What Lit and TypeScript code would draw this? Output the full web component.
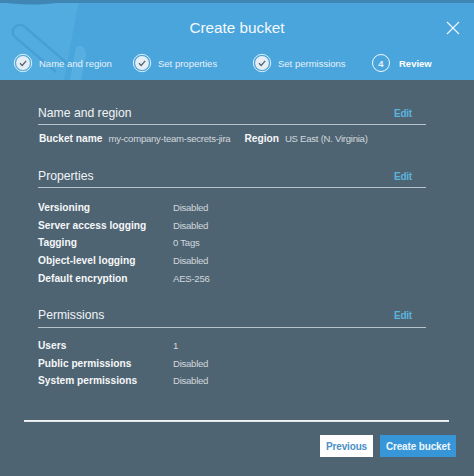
import { LitElement, html, css } from "lit";
import { customElement } from "lit/decorators.js";

const check = html`<svg class="step-ic" width="20" height="20" viewBox="0 0 20 20">
  <circle cx="10" cy="10" r="8.7" fill="none" stroke="#dcecf7" stroke-width="1"/>
  <circle cx="10" cy="10" r="6.9" fill="#e6edf3"/>
  <path d="M7 10.2l2.2 2.3 4-4.6" fill="none" stroke="#4e6472" stroke-width="1.3"/>
</svg>`;

@customElement("app-root")
export class AppRoot extends LitElement {
  static styles = css`
    :host { display: block; width: 474px; height: 476px; font-family: "Liberation Sans", Arial, sans-serif; color: #fff; }
    .modal { position: relative; width: 474px; height: 476px; background: #4f6473; overflow: hidden; display: flex; flex-direction: column; }
    .top { position: absolute; left: 0; top: 0; width: 474px; height: 3px; background: #3f86b4; }
    .head { position: relative; height: 80px; background: #4aa5dc; flex: none; overflow: hidden; }
    .deco { position: absolute; left: 0; top: 0; }
    .title { position: absolute; left: 0; right: 0; top: 18px; text-align: center; font-size: 15.3px; line-height: 20px; color: #f4f9fc; }
    .close { position: absolute; left: 446px; top: 21px; }
    .steps { position: absolute; left: 13px; top: 53px; display: flex; align-items: center; height: 20px; font-size: 9.5px; color: #e6f2fa; }
    .step { display: flex; align-items: center; gap: 6px; }
    .s1 { width: 119px; } .s2 { width: 120px; } .s3 { width: 120px; }
    .num { width: 16px; height: 16px; border: 1px solid #f2f8fc; border-radius: 50%; display: flex; align-items: center; justify-content: center; font-weight: 700; font-size: 9.5px; margin-right: 3px; }
    .rev { font-weight: 700; color: #fff; }
    .body { padding: 22px 48px 0 38px; flex: none; height: 340px; box-sizing: border-box; }
    .sec-h { display: flex; justify-content: space-between; align-items: center; height: 21px; padding-bottom: 1px; border-bottom: 1px solid #b7c4cd; font-size: 12.2px; color: #f0f3f5; }
    .edit { font-size: 10px; font-weight: 700; letter-spacing: -0.2px; color: #5cb4dd; margin-right: 14px; padding-top: 1px; }
    .inline { display: flex; align-items: center; height: 14px; margin-top: 6px; padding-left: 1px; font-size: 9.6px; letter-spacing: -0.27px; color: #cfd7dc; }
    .b { font-weight: 700; font-size: 10.2px; letter-spacing: 0; color: #f5f7f8; }
    .gap6 { margin-right: 6px; }
    .gap14 { margin-right: 14px; }
    .props { margin-top: 11px; display: grid; grid-template-columns: 135px 1fr; grid-auto-rows: 17.6px; font-size: 9.6px; letter-spacing: -0.27px; align-items: center; color: #cfd7dc; }
    .props.tight { margin-top: 9px; }
    .mt1 { margin-top: 20px; }
    .mt2 { margin-top: 18px; }
    .foot-line { height: 1px; background: #f1f4f6; margin: 0 25px 0 24px; border-bottom: 1px solid #dfe6ea; flex: none; }
    .foot { display: flex; justify-content: flex-end; gap: 7px; padding: 13px 18px 0 0; }
    .btn { height: 22px; box-sizing: border-box; font: 700 10px "Liberation Sans", Arial, sans-serif; letter-spacing: -0.15px; display: flex; align-items: center; justify-content: center; }
    .prev { width: 53px; background: #fff; color: #4a90c6; }
    .create { width: 76px; background: #3796d8; color: #eef6fb; }
  `;

  render() {
    return html`<div class="modal">
      <div class="head">
        <svg class="deco" width="100" height="80" viewBox="0 0 100 80">
          <path d="M0 0H79L64 80H0Z" fill="#52acdf"/>
          <path d="M0 0H68C60 5 20 6 0 2Z" fill="#3f86b4"/>
          <path d="M25 27L68 64M15 37L56 72" stroke="#459dd2" stroke-width="2.4" fill="none" opacity=".8"/>
          <path d="M25 27C18 21 8 30 15 37" stroke="#459dd2" stroke-width="2.4" fill="none" opacity=".8"/>
          <path d="M76 47C84 42 88 52 85 60L81 80H70Z" fill="#5ab2e2" opacity=".8"/>
        </svg>
        <div class="top"></div>
        <div class="title">Create bucket</div>
        <svg class="close" width="14" height="14" viewBox="0 0 14 14"><path d="M1 1L13 13M13 1L1 13" stroke="#f3f8fc" stroke-width="1.1" fill="none"/></svg>
        <div class="steps">
          <div class="step s1">${check}<span>Name and region</span></div>
          <div class="step s2">${check}<span>Set properties</span></div>
          <div class="step s3">${check}<span>Set permissions</span></div>
          <div class="step"><span class="num">4</span><span class="rev">Review</span></div>
        </div>
      </div>
      <div class="body">
        <div class="sec-h"><span>Name and region</span><span class="edit">Edit</span></div>
        <div class="inline"><span class="b gap6">Bucket name</span><span class="gap14">my-company-team-secrets-jira</span><span class="b gap6">Region</span><span>US East (N. Virginia)</span></div>
        <div class="sec-h mt1"><span>Properties</span><span class="edit">Edit</span></div>
        <div class="props">
          <span class="b">Versioning</span><span>Disabled</span>
          <span class="b">Server access logging</span><span>Disabled</span>
          <span class="b">Tagging</span><span>0 Tags</span>
          <span class="b">Object-level logging</span><span>Disabled</span>
          <span class="b">Default encryption</span><span>AES-256</span>
        </div>
        <div class="sec-h mt2"><span>Permissions</span><span class="edit">Edit</span></div>
        <div class="props tight">
          <span class="b">Users</span><span>1</span>
          <span class="b">Public permissions</span><span>Disabled</span>
          <span class="b">System permissions</span><span>Disabled</span>
        </div>
      </div>
      <div class="foot-line"></div>
      <div class="foot"><div class="btn prev">Previous</div><div class="btn create">Create bucket</div></div>
    </div>`;
  }
}
